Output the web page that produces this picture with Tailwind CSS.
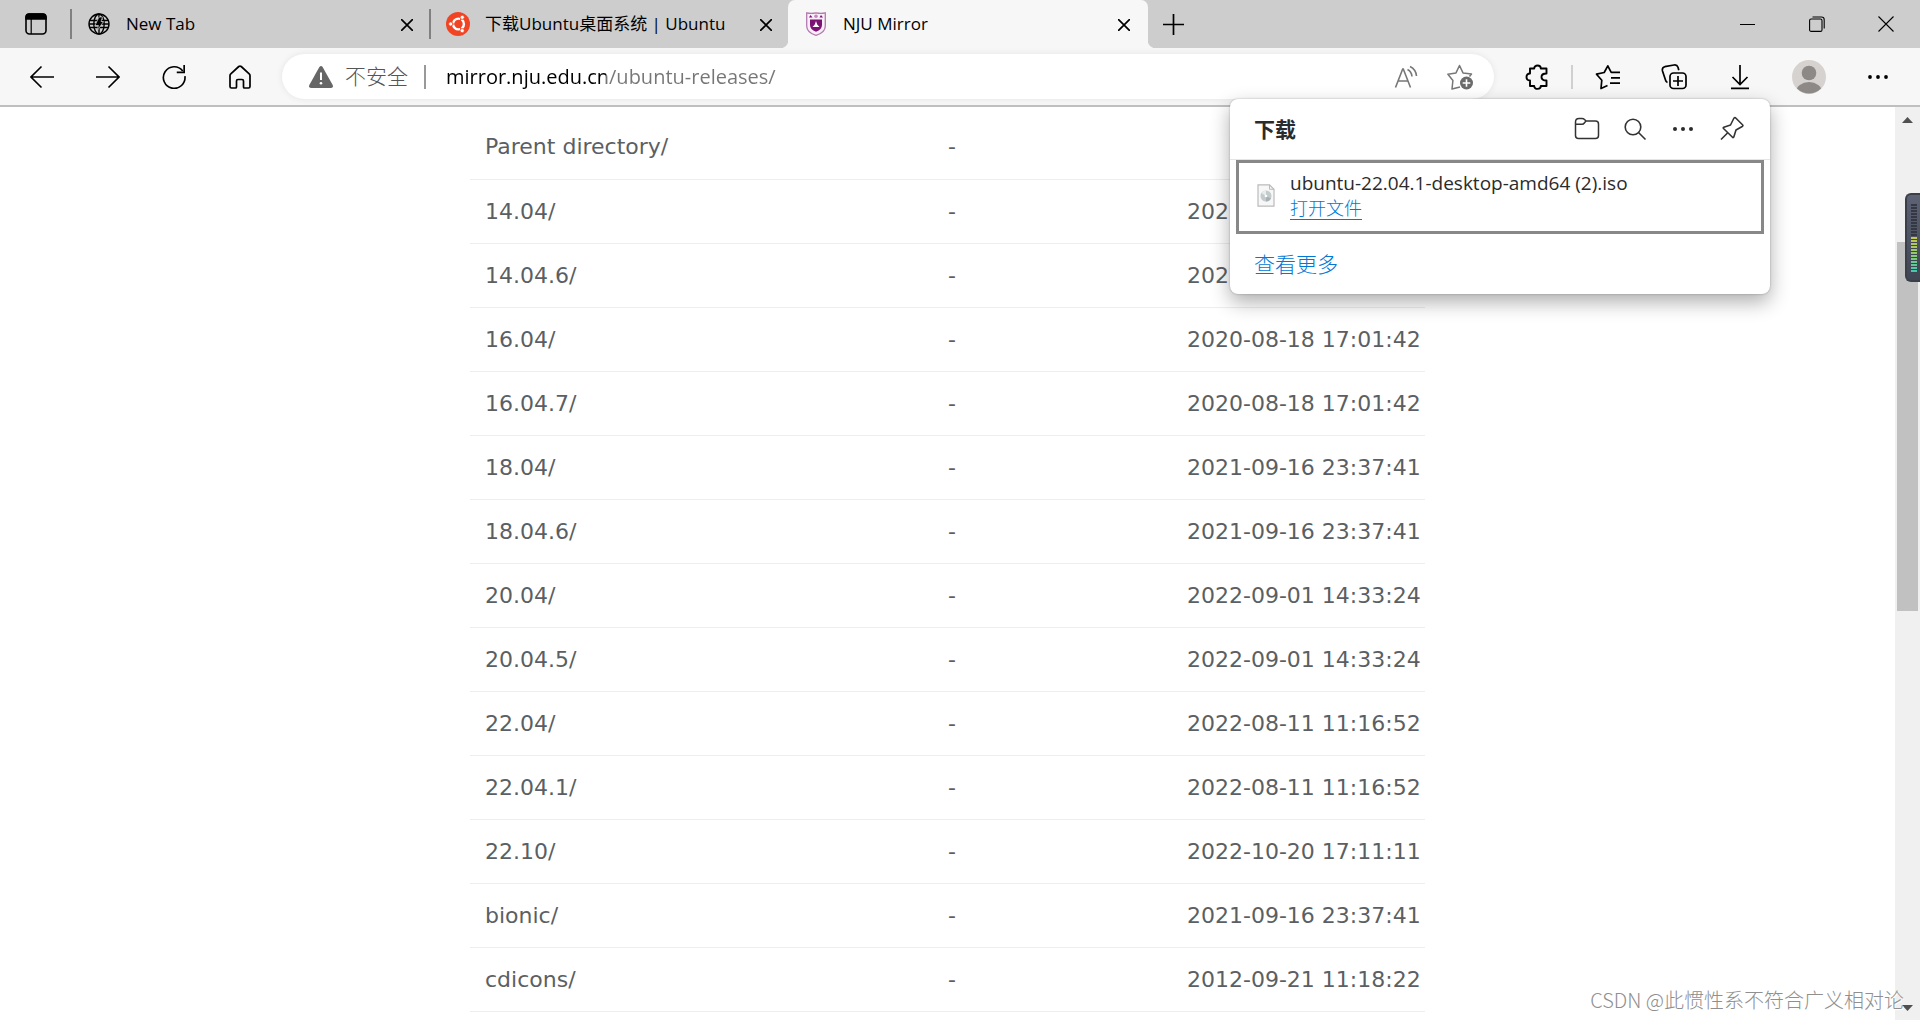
<!DOCTYPE html>
<html lang="zh-CN">
<head>
<meta charset="utf-8">
<title>NJU Mirror</title>
<script src="https://cdn.jsdelivr.net/npm/@tailwindcss/browser@4"></script>
</head>
<body class="relative flex h-screen flex-col overflow-hidden bg-white font-['Open_Sans','Noto_Sans_CJK_SC',sans-serif] text-black">

<!-- Tab strip -->
<header class="flex h-12 shrink-0 bg-[#cdcdcd] text-[17px]">
  <button aria-label="Tab actions" class="flex w-[70px] shrink-0 items-center pl-[25px]">
    <svg width="22" height="22" viewBox="0 0 22 22" fill="none" stroke="#000" stroke-width="1.6"><rect x="1" y="1" width="20" height="20" rx="3.5"/><path d="M1 5V4a3 3 0 0 1 3-3h14a3 3 0 0 1 3 3v2H1z" fill="#000"/><path d="M6.2 6v15" stroke-width="1.2"/></svg>
  </button>
  <div class="flex w-[359px] items-center">
    <span class="h-[30px] w-0.5 bg-[#808080]"></span>
    <svg class="ml-4 shrink-0" width="22" height="22" viewBox="0 0 22 22" fill="none" stroke="#000" stroke-width="1.4"><circle cx="11" cy="11" r="10"/><ellipse cx="11" cy="11" rx="5.2" ry="10"/><path d="M11 1v20M1.5 7.5h19M1.5 14.500h19M1 11h20"/><path d="M11 4h3.500l-1.500 4.500h2.500L9 18l1.500-5.500H7z" fill="#000" stroke="#cdcdcd" stroke-width=".7"/></svg>
    <span class="ml-4 flex-1 whitespace-nowrap">New Tab</span>
    <button aria-label="Close tab" class="mr-[10px] flex size-6 items-center justify-center pt-0.5"><svg width="12" height="12" viewBox="0 0 12 12" stroke="#000" stroke-width="1.7"><path d="M0 0l12 12M12 0L0 12"/></svg></button>
  </div>
  <div class="flex w-[359px] items-center">
    <span class="h-[30px] w-0.5 bg-[#808080]"></span>
    <svg class="ml-[15px] shrink-0" width="24" height="24" viewBox="0 0 24 24" fill="none"><circle cx="12" cy="12" r="12" fill="#f04424"/><circle cx="12.500" cy="12" r="5.400" stroke="#fff" stroke-width="2.400"/><g stroke="#f04424" stroke-width="1.200"><path d="M12 12H5M12.500 12l3.500-7M12.500 12l3.500 7"/></g><g fill="#fff" stroke="#f04424" stroke-width=".8"><circle cx="4.700" cy="12" r="2.100"/><circle cx="16.200" cy="5.300" r="2.100"/><circle cx="16.200" cy="18.700" r="2.100"/></g></svg>
    <span class="ml-[15px] flex-1 whitespace-nowrap">下载Ubuntu桌面系统 | Ubuntu</span>
    <button aria-label="Close tab" class="mr-[10px] flex size-6 items-center justify-center pt-0.5"><svg width="12" height="12" viewBox="0 0 12 12" stroke="#000" stroke-width="1.7"><path d="M0 0l12 12M12 0L0 12"/></svg></button>
  </div>
  <div class="relative flex w-[360px] items-center rounded-t-[7px] bg-[#f7f7f7] before:absolute before:bottom-0 before:-left-2 before:size-2 before:rounded-br-[7px] before:bg-[#cdcdcd] before:shadow-[3px_3px_0_#f7f7f7] before:[clip-path:inset(0)] after:absolute after:-right-2 after:bottom-0 after:size-2 after:rounded-bl-[7px] after:bg-[#cdcdcd] after:shadow-[-3px_3px_0_#f7f7f7] after:[clip-path:inset(0)]">
    <svg class="ml-[18px] shrink-0" width="20" height="24" viewBox="0 0 20 24" fill="none"><path d="M.7.8Q5 1.800 10 .8q5 1 9.300 0V14q0 6.500-9.300 9.300Q.7 20.500.7 14z" fill="#f8eef7" stroke="#b27ab0" stroke-width="1.300"/><path d="M4 7.500h12V13q0 4.500-6 6.800Q4 17.500 4 13z" fill="#7b1273"/><path d="M10 9l1.200 3.500 2.300 2.500h-7l2.300-2.500z" fill="#fff"/><path d="M3 5.500l1.500-2.500L6.500 5.500zM13.500 5.500l1.500-2.500L17 5.500z" fill="#7b1273"/><circle cx="10" cy="4.200" r="1.800" fill="#c08abc"/></svg>
    <span class="ml-[17px] flex-1 whitespace-nowrap">NJU Mirror</span>
    <button aria-label="Close tab" class="mr-3 flex size-6 items-center justify-center pt-0.5"><svg width="12" height="12" viewBox="0 0 12 12" stroke="#000" stroke-width="1.7"><path d="M0 0l12 12M12 0L0 12"/></svg></button>
  </div>
  <button aria-label="New tab" class="ml-[15px] flex w-[21px] items-center justify-center"><svg width="21" height="21" viewBox="0 0 21 21" stroke="#000" stroke-width="1.700"><path d="M10.500 0v21M0 10.500h21"/></svg></button>
  <div class="ml-auto flex">
    <button aria-label="Minimize" class="flex w-[69px] items-center justify-center"><svg width="15" height="15" viewBox="0 0 15 15" stroke="#000"><path d="M0 7.500h15"/></svg></button>
    <button aria-label="Restore" class="flex w-[69px] items-center justify-center"><svg width="16" height="16" viewBox="0 0 16 16" fill="none" stroke="#000" stroke-width="1.100"><rect x=".6" y="3" width="12.400" height="12.400" rx="1.500"/><path d="M3.500 1H12.500q2.700 0 2.700 2.700V12.500"/></svg></button>
    <button aria-label="Close" class="flex w-[69px] items-center justify-center"><svg width="16" height="16" viewBox="0 0 16 16" stroke="#000" stroke-width="1.100"><path d="M.5.5l15 15M15.500.5l-15 15"/></svg></button>
  </div>
</header>

<!-- Toolbar -->
<nav class="relative z-10 flex h-[59px] shrink-0 items-center border-b-2 border-[#bfbfbf] bg-[#f7f7f7]">
  <div class="flex pl-[9px]">
    <button aria-label="Back" class="flex w-[66px] justify-center"><svg width="24" height="24" viewBox="0 0 24 24" fill="none" stroke="#000" stroke-width="1.600"><path d="M11.500 1.500L1 12l10.500 10.500M1 12h23"/></svg></button>
    <button aria-label="Forward" class="flex w-[66px] justify-center"><svg width="24" height="24" viewBox="0 0 24 24" fill="none" stroke="#000" stroke-width="1.600"><path d="M12.500 1.500L23 12 12.500 22.500M23 12H0"/></svg></button>
    <button aria-label="Refresh" class="flex w-[66px] justify-center"><svg width="24" height="24" viewBox="0 0 26 26" fill="none" stroke="#000" stroke-width="1.800"><path d="M24.800 12A11.700 11.700 0 1 1 22.500 6.500"/><path d="M16 8h8V0"/></svg></button>
    <button aria-label="Home" class="flex w-[66px] justify-center"><svg width="24" height="24" viewBox="0 0 24 24" fill="none" stroke="#000" stroke-width="1.700" stroke-linejoin="round"><path d="M2 10.500q0-1 .8-1.700l8-7.300q1.200-.9 2.400 0l8 7.300q.8.700.8 1.700V21.500q0 1.500-1.500 1.500h-4q-1 0-1-1V16q0-1.500-1.500-1.500h-4Q8.500 14.500 8.500 16v6q0 1-1 1h-4Q2 23 2 21.500z"/></svg></button>
  </div>
  <div class="ml-[9px] flex h-[45px] flex-1 items-center rounded-full bg-white shadow-[0_0_7px_rgba(0,0,0,0.080)]">
    <svg class="ml-[27px] shrink-0" width="24" height="22" viewBox="0 0 24 22"><path d="M10.400 1Q12-1 13.600 1L23.700 19q.9 3-1.700 3H2Q-.6 22 .3 19z" fill="#666"/><path d="M12 6.500v7.500" stroke="#fff" stroke-width="2"/><circle cx="12" cy="17.300" r="1.300" fill="#fff"/></svg>
    <span class="ml-3 whitespace-nowrap text-[21px] font-light text-[#555]">不安全</span>
    <span class="ml-4 h-6 w-0.5 bg-[#999]"></span>
    <input aria-label="Address" value="mirror.nju.edu.cn/ubuntu-releases/" class="ml-5 h-8 min-w-0 flex-1 bg-[linear-gradient(to_right,#000_160px,#767676_160px)] bg-clip-text text-xl text-transparent outline-none">
    <button aria-label="Read aloud" class="flex w-[54px] justify-center"><svg width="24" height="24" viewBox="0 0 24 24" fill="none" stroke="#777" stroke-width="1.600"><path d="M1.500 22.500L8.700 4h.6l7.200 18.500M4 16h10.500M13.500 4.500q4 2 4.500 7M16 1.500q6 3 6.500 9.500"/></svg></button>
    <button aria-label="Add to favorites" class="mr-[7px] flex w-[54px] justify-center"><svg width="26" height="26" viewBox="0 0 26 26" fill="none"><path d="M13 23l-8 2 .9-8.500L.9 10.200l8.100-1.300L12.500 1.500 16 8.900l8.500 1.100-2 2.500" stroke="#777" stroke-width="1.500" stroke-linejoin="round"/><circle cx="19.500" cy="19" r="6.500" fill="#6b6b6b"/><path d="M19.500 15.200v7.600M15.700 19h7.600" stroke="#fff" stroke-width="1.600"/></svg></button>
  </div>
  <div class="flex items-center">
    <button aria-label="Extensions" class="mr-3 ml-[21px] flex w-11 justify-center"><svg width="24" height="26" viewBox="0 0 24 26" fill="none" stroke="#000" stroke-width="1.900" stroke-linejoin="round"><path d="M5 4.500h4.200c0-4 6.600-4 6.600 0h5.700V9.500q-5 0-5 3.500t5 3.500V22h-5.700c0 3.800-6.600 3.800-6.600 0H5v-5.500q-3.500 0-3.500-3.500T5 9.500z"/></svg></button>
    <span class="h-6 w-0.5 bg-[#d0d0d0]"></span>
    <button aria-label="Favorites" class="ml-0.5 flex w-[66px] justify-center"><svg width="26" height="26" viewBox="0 0 26 26" fill="none" stroke="#000" stroke-width="1.700" stroke-linejoin="round"><path d="M12.500 21.500L6 24.500l.8-8.300L1.500 10.200 9.200 8.500 12.800 1.800 16.200 8.300H25M16 13.800h9M15 19.200h10"/></svg></button>
    <button aria-label="Collections" class="flex w-[66px] justify-center"><svg width="26" height="26" viewBox="0 0 26 26" fill="none" stroke="#000" stroke-width="1.700"><rect x="9" y="9" width="16" height="15.500" rx="3.500"/><path d="M17 12v10M12 17h10M6.500 18.500Q5 18 4.500 16L1.500 7q-.8-3.500 2.300-4.300L13 1q3-.5 4 2.200l.8 3"/></svg></button>
    <button aria-label="Downloads" class="flex w-[66px] justify-center"><svg width="20" height="26" viewBox="0 0 20 26" fill="none" stroke="#000" stroke-width="1.700"><path d="M10 1v19M2.500 13l7.500 7.500L17.500 13M1 24.300h18"/></svg></button>
    <button aria-label="Profile" class="flex w-[72px] justify-center"><svg width="34" height="34" viewBox="0 0 34 34"><defs><clipPath id="face"><circle cx="17" cy="17" r="16.500"/></clipPath></defs><circle cx="17" cy="17" r="17" fill="#d6d2cf"/><g fill="#8d8986" clip-path="url(#face)"><circle cx="17" cy="13" r="7.300"/><ellipse cx="17" cy="32" rx="13" ry="10"/></g></svg></button>
    <button aria-label="Settings and more" class="mr-[9px] flex w-[66px] justify-center"><svg width="20" height="4" viewBox="0 0 20 4"><circle cx="2" cy="2" r="1.900"/><circle cx="10" cy="2" r="1.900"/><circle cx="18" cy="2" r="1.900"/></svg></button>
  </div>

  <!-- Downloads flyout -->
  <section class="absolute top-[51px] right-[150px] flex h-[195px] w-[540px] flex-col rounded-lg bg-white text-[#2b2b2b] shadow-[0_0_2px_rgba(0,0,0,0.300),0_8px_20px_rgba(0,0,0,0.320)]">
    <div class="flex h-[61px] items-center border-b border-[#e5e5e5] pr-[13px] pl-6">
      <h2 class="flex-1 pt-0.5 text-[21px] font-bold">下载</h2>
      <button aria-label="Open downloads folder" class="flex w-12 justify-center"><svg width="26" height="24" viewBox="0 0 26 24" fill="none" stroke="#333" stroke-width="1.500"><path d="M1.500 7.500V5q0-3.500 3.500-3.500h3q1.500 0 2.500 1L12 4h9.500Q24.500 4 24.500 7v11.500q0 3-3 3h-17q-3 0-3-3zM1.500 7.200H8q1.500 0 2.300-1.200L12 4"/></svg></button>
      <button aria-label="Search downloads" class="flex w-12 justify-center"><svg width="24" height="24" viewBox="0 0 24 24" fill="none" stroke="#333" stroke-width="1.600"><circle cx="10" cy="10" r="7.800"/><path d="M15.500 15.500l7 7"/></svg></button>
      <button aria-label="More options" class="flex w-12 justify-center"><svg width="20" height="4" viewBox="0 0 20 4" fill="#2b2b2b"><circle cx="2" cy="2" r="2"/><circle cx="10" cy="2" r="2"/><circle cx="18" cy="2" r="2"/></svg></button>
      <button aria-label="Pin downloads" class="flex w-[50px] justify-center"><svg width="26" height="26" viewBox="0 0 26 26" fill="none" stroke="#333" stroke-width="1.600" stroke-linejoin="round"><path d="M15 2q1-.8 2 .2l6.500 6.500q1 1-.3 1.800L17 14l-2.200 7q-.5 1-1.300.3L4.500 12.500q-.7-.8.3-1.300L11.500 9zM8.500 17L2 23.500"/></svg></button>
    </div>
    <div class="mx-1.5 flex h-[74px] items-center border-[3px] border-[#888] pb-[3px] pl-[18px]">
      <svg class="shrink-0" width="18" height="23" viewBox="0 0 18 23" fill="none"><path d="M1 .8h11.500L17 5.300V22.200H1z" fill="#f7f7f7" stroke="#bbb" stroke-width="1.200"/><path d="M12.500.8v4.500H17" stroke="#bbb"/><circle cx="9" cy="12" r="5.500" fill="#c4cbcd"/><path d="M9 12L4.500 9A5.500 5.500 0 0 1 9 6.500z" fill="#e6edeb"/><path d="M9 12l5 2.500A5.500 5.500 0 0 1 9 17.500z" fill="#a9b1b4"/><circle cx="9" cy="12" r="1.300" fill="#fff"/></svg>
      <div class="ml-[15px] flex flex-col items-start">
        <span class="text-[19px] leading-6">ubuntu-22.04.1-desktop-amd64 (2).iso</span>
        <a href="#" class="border-b border-[#0078d4] font-['Noto_Sans_CJK_SC',sans-serif] text-lg leading-6 font-light text-[#0078d4]">打开文件</a>
      </div>
    </div>
    <a href="#" class="mt-[15px] ml-6 self-start text-[21px] leading-[30px] font-light text-[#0078d4]">查看更多</a>
  </section>
</nav>

<!-- Page and its scroll bar -->
<div class="flex min-h-0 flex-1">
  <main class="min-w-0 flex-1 overflow-hidden pt-2">
    <table class="mx-auto w-full max-w-[955px] table-fixed font-['DejaVu_Sans',sans-serif] text-[22px] text-[#5b5f63] [&_td]:pl-[15px] [&_td]:whitespace-nowrap [&_tr]:h-16 [&_tr]:border-b [&_tr]:border-[#eee]">
      <colgroup><col><col class="w-[239px]"><col class="w-[253px]"></colgroup>
      <tbody>
        <tr><td><a href="#">Parent directory/</a></td><td>-</td><td></td></tr>
        <tr><td><a href="#">14.04/</a></td><td>-</td><td>2020-08-18 17:01:42</td></tr>
        <tr><td><a href="#">14.04.6/</a></td><td>-</td><td>2020-08-18 17:01:42</td></tr>
        <tr><td><a href="#">16.04/</a></td><td>-</td><td>2020-08-18 17:01:42</td></tr>
        <tr><td><a href="#">16.04.7/</a></td><td>-</td><td>2020-08-18 17:01:42</td></tr>
        <tr><td><a href="#">18.04/</a></td><td>-</td><td>2021-09-16 23:37:41</td></tr>
        <tr><td><a href="#">18.04.6/</a></td><td>-</td><td>2021-09-16 23:37:41</td></tr>
        <tr><td><a href="#">20.04/</a></td><td>-</td><td>2022-09-01 14:33:24</td></tr>
        <tr><td><a href="#">20.04.5/</a></td><td>-</td><td>2022-09-01 14:33:24</td></tr>
        <tr><td><a href="#">22.04/</a></td><td>-</td><td>2022-08-11 11:16:52</td></tr>
        <tr><td><a href="#">22.04.1/</a></td><td>-</td><td>2022-08-11 11:16:52</td></tr>
        <tr><td><a href="#">22.10/</a></td><td>-</td><td>2022-10-20 17:11:11</td></tr>
        <tr><td><a href="#">bionic/</a></td><td>-</td><td>2021-09-16 23:37:41</td></tr>
        <tr><td><a href="#">cdicons/</a></td><td>-</td><td>2012-09-21 11:18:22</td></tr>
      </tbody>
    </table>
  </main>
  <div class="flex w-[25px] shrink-0 flex-col items-center bg-[#f0f0f0]">
    <svg class="mt-[10px] shrink-0" width="11" height="6" viewBox="0 0 11 6" fill="#505050"><path d="M0 6l5.500-6L11 6z"/></svg>
    <div class="mt-[119px] h-[369px] w-[21px] bg-[#c1c1c1]"></div>
    <svg class="mt-auto mb-[9px] shrink-0" width="11" height="6" viewBox="0 0 11 6" fill="#505050"><path d="M0 0l5.500 6L11 0z"/></svg>
  </div>
</div>

<!-- Level meter docked at the screen edge -->
<div class="absolute top-[193px] right-0 z-20 flex h-[89px] w-[15px] flex-col items-center rounded-l-md border-2 border-r-0 border-[#3b3f4a] bg-linear-to-b from-[#5d6375] to-[#3f4552] pt-[9px]">
  <div class="h-[33px] w-1.5 bg-[repeating-linear-gradient(to_bottom,#343842_0_2px,transparent_2px_3px)]"></div>
  <div class="h-9 w-1.5 bg-[repeating-linear-gradient(to_bottom,transparent_0_2px,#3f4552_2px_3px),linear-gradient(to_bottom,#c8c84c,#8cc870,#3cc8b8)]"></div>
</div>

<p class="absolute right-4 bottom-1.5 z-20 text-xl leading-7 font-light whitespace-nowrap text-[#8f8f8f] font-['Noto_Sans_CJK_SC',sans-serif] [text-shadow:1px_1px_0_#fff]">CSDN @此惯性系不符合广义相对论</p>
</body>
</html>
